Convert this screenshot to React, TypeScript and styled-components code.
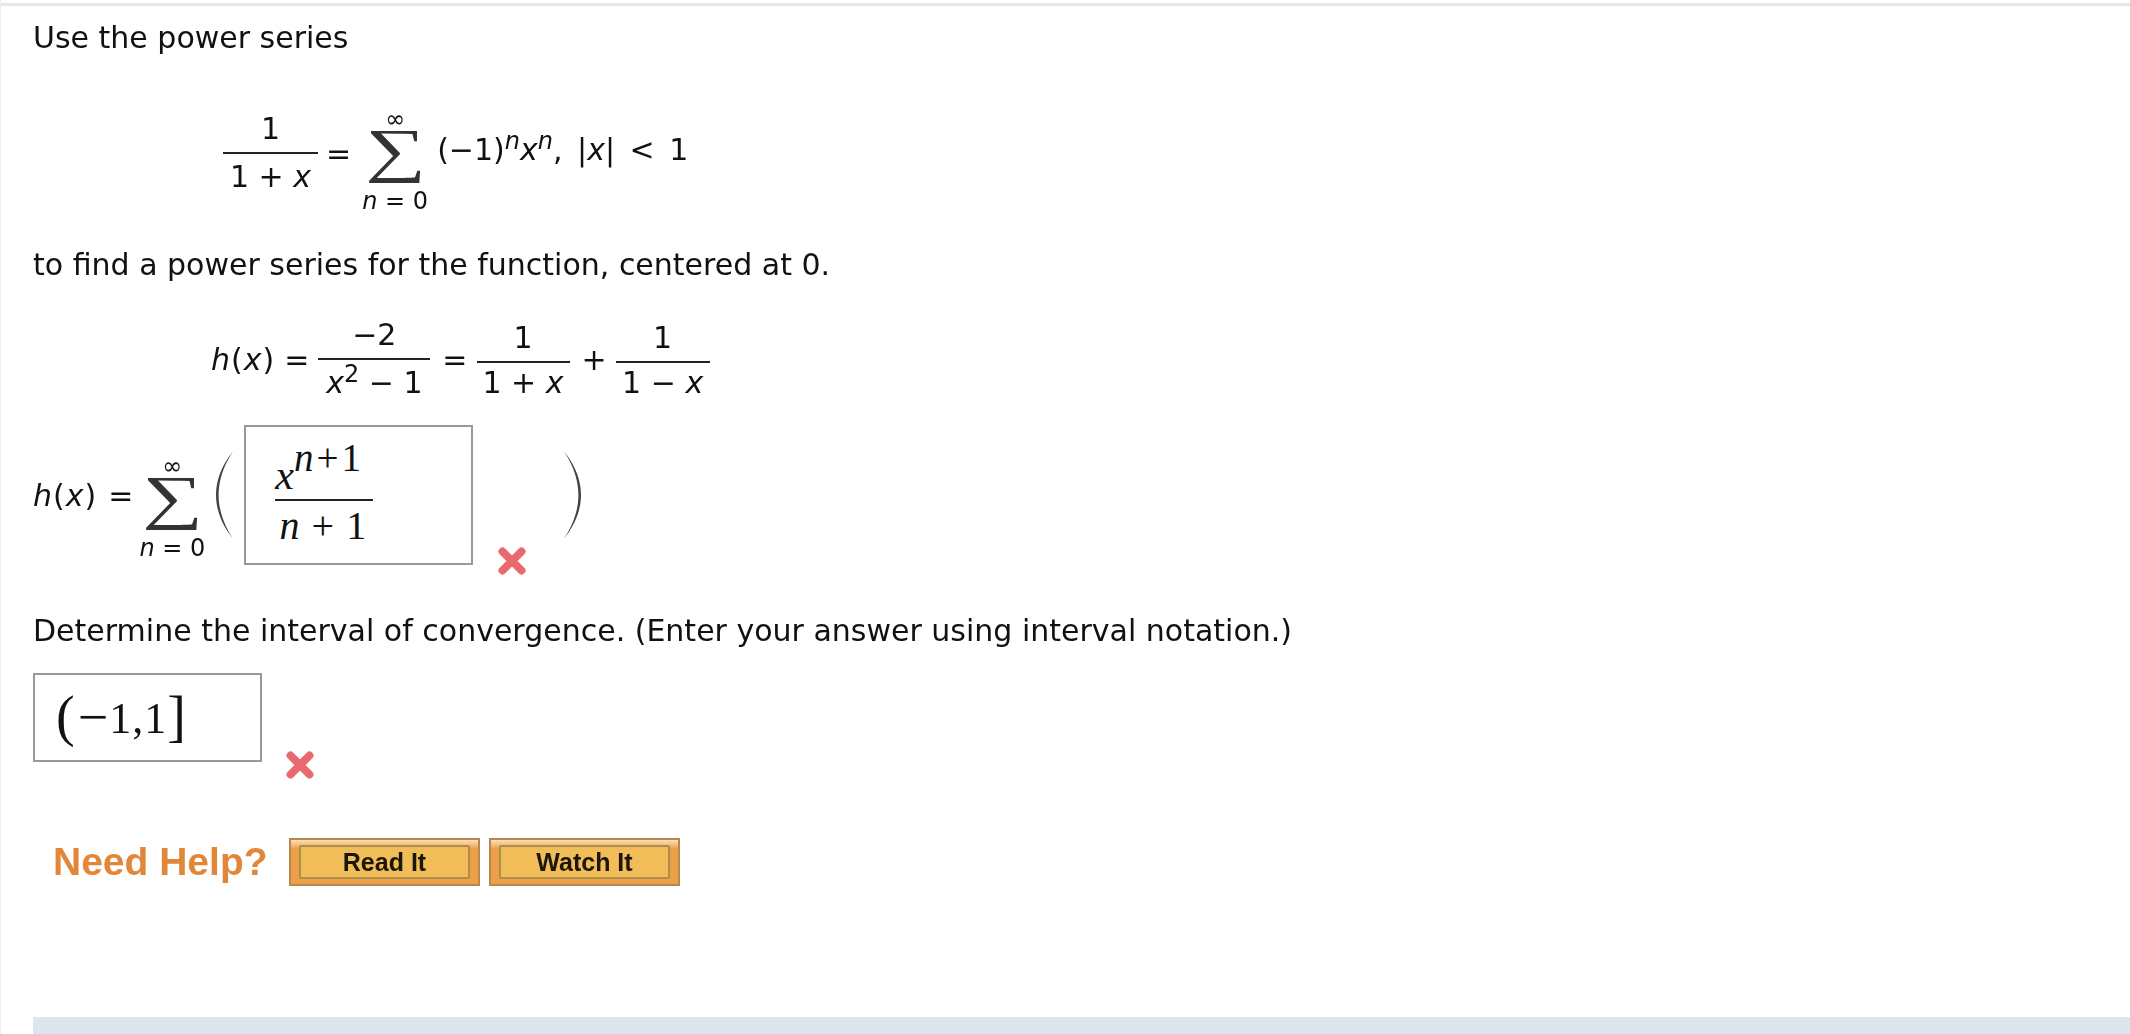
import React from "react";
import styled, { createGlobalStyle } from "styled-components";

const GlobalStyle = createGlobalStyle`
  html, body {
    margin: 0;
    padding: 0;
    background: #fff;
  }
  body {
    font-family: "DejaVu Sans", Verdana, sans-serif;
    color: #111;
  }
`;

const Page = styled.div`
  height: 1034px;
  overflow: hidden;
  display: flex;
  flex-direction: column;
  border-left: 1px solid #eee;
  box-sizing: border-box;
  filter: blur(0.35px);
`;
const TopRule = styled.div`
  height: 3px;
  margin-top: 3px;
  background: #e6e6e6;
`;
const Prompt = styled.p<{ $top: number }>`
  margin: ${(p) => p.$top}px 0 0 32px;
  font-size: 30px;
  line-height: 34px;
  height: 34px;
  white-space: nowrap;
`;
const Equation = styled.div<{ $top: number; $left: number; $height: number }>`
  margin: ${(p) => p.$top}px 0 0 ${(p) => p.$left}px;
  height: ${(p) => p.$height}px;
  display: flex;
  align-items: center;
  font-size: 30px;
  white-space: nowrap;
`;
const Var = styled.i`
  font-style: italic;
`;
const Sup = styled.sup`
  font-size: 24px;
  line-height: 0;
  vertical-align: 11px;
`;
const FunctionName = styled.span`
  letter-spacing: 1px;
`;
const Terms = styled.span`
  margin: -7px 0 0 9px;
  word-spacing: 5px;
`;
const Fraction = styled.div<{ $width: number; $drop?: number }>`
  width: ${(p) => p.$width}px;
  margin-top: ${(p) => p.$drop ?? 0}px;
  flex: none;
  display: flex;
  flex-direction: column;
  align-items: center;
  line-height: 46px;
`;
const Part = styled.div<{ $lift?: number }>`
  height: 46px;
  margin-top: ${(p) => -(p.$lift ?? 0)}px;
`;
const Bar = styled.div`
  align-self: stretch;
  height: 2px;
  background: #222;
`;
const Op = styled.span<{ $left: number; $right: number }>`
  margin: 0 ${(p) => p.$right}px 0 ${(p) => p.$left}px;
`;
const Sum = styled.div<{ $left: number; $drop: number }>`
  margin: ${(p) => p.$drop}px 0 0 ${(p) => p.$left}px;
  width: 66px;
  flex: none;
  display: flex;
  flex-direction: column;
  align-items: center;
`;
const Limit = styled.div`
  font-size: 24px;
  line-height: 24px;
  height: 24px;
`;
const Sigma = styled.div`
  font-family: "Liberation Serif", serif;
  font-size: 60px;
  line-height: 58px;
  height: 58px;
  color: #333;
  transform: translateY(-10px) scaleX(1.42);
`;
const BigParen = styled.svg<{ $left: number; $flip?: boolean }>`
  width: 20px;
  height: 88px;
  flex: none;
  margin-left: ${(p) => p.$left}px;
  transform: ${(p) => (p.$flip ? "scaleX(-1)" : "none")};
`;
const AnswerBox = styled.div<{ $width: number; $height: number; $left?: number }>`
  box-sizing: border-box;
  width: ${(p) => p.$width}px;
  height: ${(p) => p.$height}px;
  margin-left: ${(p) => p.$left ?? 0}px;
  border: 2px solid #999;
  background: #fff;
  flex: none;
  display: flex;
  align-items: center;
  font-family: "Liberation Serif", "Times New Roman", serif;
`;
const MathFraction = styled.div`
  width: 98px;
  margin-left: 29px;
  display: flex;
  flex-direction: column;
  align-items: center;
  font-size: 40px;
`;
const MathTop = styled.div`
  height: 61px;
  align-self: flex-start;
  line-height: 74px;
  font-size: 42px;
`;
const MathSup = styled.span`
  font-size: 39px;
  position: relative;
  top: -18px;
  letter-spacing: 3px;
`;
const MathBar = styled.div`
  align-self: stretch;
  height: 2px;
  background: #222;
`;
const MathBottom = styled.div`
  height: 52px;
  line-height: 50px;
  word-spacing: -4px;
  letter-spacing: 3px;
`;
const Interval = styled.div`
  margin-left: 21px;
  font-size: 44px;
  line-height: 50px;
  letter-spacing: 1px;
  white-space: nowrap;
`;
const IntervalParen = styled.span`
  font-size: 56px;
  font-weight: 300;
  vertical-align: -2px;
`;
const IntervalMinus = styled.span`
  font-size: 54px;
  line-height: 0;
  margin-left: 2px;
  vertical-align: -2px;
`;
const Cross = styled.svg<{ $left: number; $top: number }>`
  width: 32px;
  height: 32px;
  flex: none;
  margin-left: ${(p) => p.$left}px;
  align-self: flex-start;
  margin-top: ${(p) => p.$top}px;
`;
const Gap = styled.span<{ $width: number }>`
  width: ${(p) => p.$width}px;
  flex: none;
`;
const HelpRow = styled.div`
  margin: 76px 0 0 52px;
  display: flex;
  align-items: center;
  height: 48px;
`;
const HelpLabel = styled.span`
  font-family: "Liberation Sans", Arial, sans-serif;
  font-weight: 700;
  font-size: 39px;
  color: #e2873a;
  width: 236px;
  white-space: nowrap;
`;
const HelpButton = styled.button`
  box-sizing: border-box;
  width: 191px;
  height: 48px;
  margin-right: 9px;
  padding: 0;
  border: 2px solid #b9884f;
  background: linear-gradient(#fbdcb8 0, #f3bd80 5px, #eb9f47 9px);
  display: flex;
  align-items: center;
  justify-content: center;
`;
const HelpButtonFace = styled.span`
  box-sizing: border-box;
  width: 171px;
  height: 34px;
  border: 2px solid #ad8e4a;
  border-radius: 2px;
  background: #f1bd58;
  font-family: "Liberation Sans", Arial, sans-serif;
  font-weight: 700;
  font-size: 25px;
  line-height: 30px;
  color: #1c1608;
  text-align: center;
`;
const Band = styled.div`
  margin: auto 0 0 32px;
  height: 17px;
  background: #dce6ef;
`;

const Paren = ({ left, flip }: { left: number; flip?: boolean }) => (
  <BigParen $left={left} $flip={flip} viewBox="0 0 20 88">
    <path d="M18 0.5 C 5 16 1 32 1 44 C 1 56 5 72 18 87.5 C 7 71 3.6 56 3.6 44 C 3.6 32 7 17 18 0.5 Z" fill="#444" />
  </BigParen>
);

const CrossMark = ({ left, top }: { left: number; top: number }) => (
  <Cross $left={left} $top={top} viewBox="0 0 32 32">
    <path d="M6.5 6.5 L25.5 25.5 M25.5 6.5 L6.5 25.5" stroke="#e96a6e" strokeWidth="8" strokeLinecap="round" />
  </Cross>
);

const App = () => {
  return (
    <Page>
      <GlobalStyle />
      <TopRule />
      <Prompt $top={15}>Use the power series</Prompt>
      <Equation $top={44} $left={222} $height={108}>
        <Fraction $width={95}>
          <Part>1</Part>
          <Bar />
          <Part>
            1 + <Var>x</Var>
          </Part>
        </Fraction>
        <Op $left={8} $right={0}>=</Op>
        <Sum $left={11} $drop={14}>
          <Limit>∞</Limit>
          <Sigma>∑</Sigma>
          <Limit>
            <Var>n</Var> = 0
          </Limit>
        </Sum>
        <Terms>
          (−1)<Sup><Var>n</Var></Sup><Var>x</Var><Sup><Var>n</Var></Sup>, |<Var>x</Var>| &lt; 1
        </Terms>
      </Equation>
      <Prompt $top={41}>to find a power series for the function, centered at 0.</Prompt>
      <Equation $top={29} $left={210} $height={96}>
        <FunctionName>
          <Var>h</Var>(<Var>x</Var>)
        </FunctionName>
        <Op $left={9} $right={9}>=</Op>
        <Fraction $width={112}>
          <Part>−2</Part>
          <Bar />
          <Part>
            <Var>x</Var><Sup>2</Sup> − 1
          </Part>
        </Fraction>
        <Op $left={12} $right={9}>=</Op>
        <Fraction $width={93} $drop={3}>
          <Part>1</Part>
          <Bar />
          <Part $lift={3}>
            1 + <Var>x</Var>
          </Part>
        </Fraction>
        <Op $left={12} $right={9}>+</Op>
        <Fraction $width={94} $drop={3}>
          <Part>1</Part>
          <Bar />
          <Part $lift={3}>
            1 − <Var>x</Var>
          </Part>
        </Fraction>
      </Equation>
      <Equation $top={18} $left={32} $height={140}>
        <FunctionName>
          <Var>h</Var>(<Var>x</Var>)
        </FunctionName>
        <Op $left={11} $right={0}>=</Op>
        <Sum $left={6} $drop={24}>
          <Limit>∞</Limit>
          <Sigma>∑</Sigma>
          <Limit>
            <Var>n</Var> = 0
          </Limit>
        </Sum>
        <Paren left={10} />
        <AnswerBox $width={229} $height={140} $left={9}>
          <MathFraction>
            <MathTop>
              <Var>x</Var>
              <MathSup><Var>n</Var>+1</MathSup>
            </MathTop>
            <MathBar />
            <MathBottom>
              <Var>n</Var> + 1
            </MathBottom>
          </MathFraction>
        </AnswerBox>
        <CrossMark left={23} top={120} />
        <Gap $width={34} />
        <Paren left={0} flip />
      </Equation>
      <Prompt $top={49}>Determine the interval of convergence. (Enter your answer using interval notation.)</Prompt>
      <Equation $top={25} $left={32} $height={89}>
        <AnswerBox $width={229} $height={89}>
          <Interval>
            <IntervalParen>(</IntervalParen><IntervalMinus>−</IntervalMinus>1,1<IntervalParen>]</IntervalParen>
          </Interval>
        </AnswerBox>
        <CrossMark left={22} top={76} />
      </Equation>
      <HelpRow>
        <HelpLabel>Need Help?</HelpLabel>
        <HelpButton><HelpButtonFace>Read It</HelpButtonFace></HelpButton>
        <HelpButton><HelpButtonFace>Watch It</HelpButtonFace></HelpButton>
      </HelpRow>
      <Band />
    </Page>
  );
};

export default App;
